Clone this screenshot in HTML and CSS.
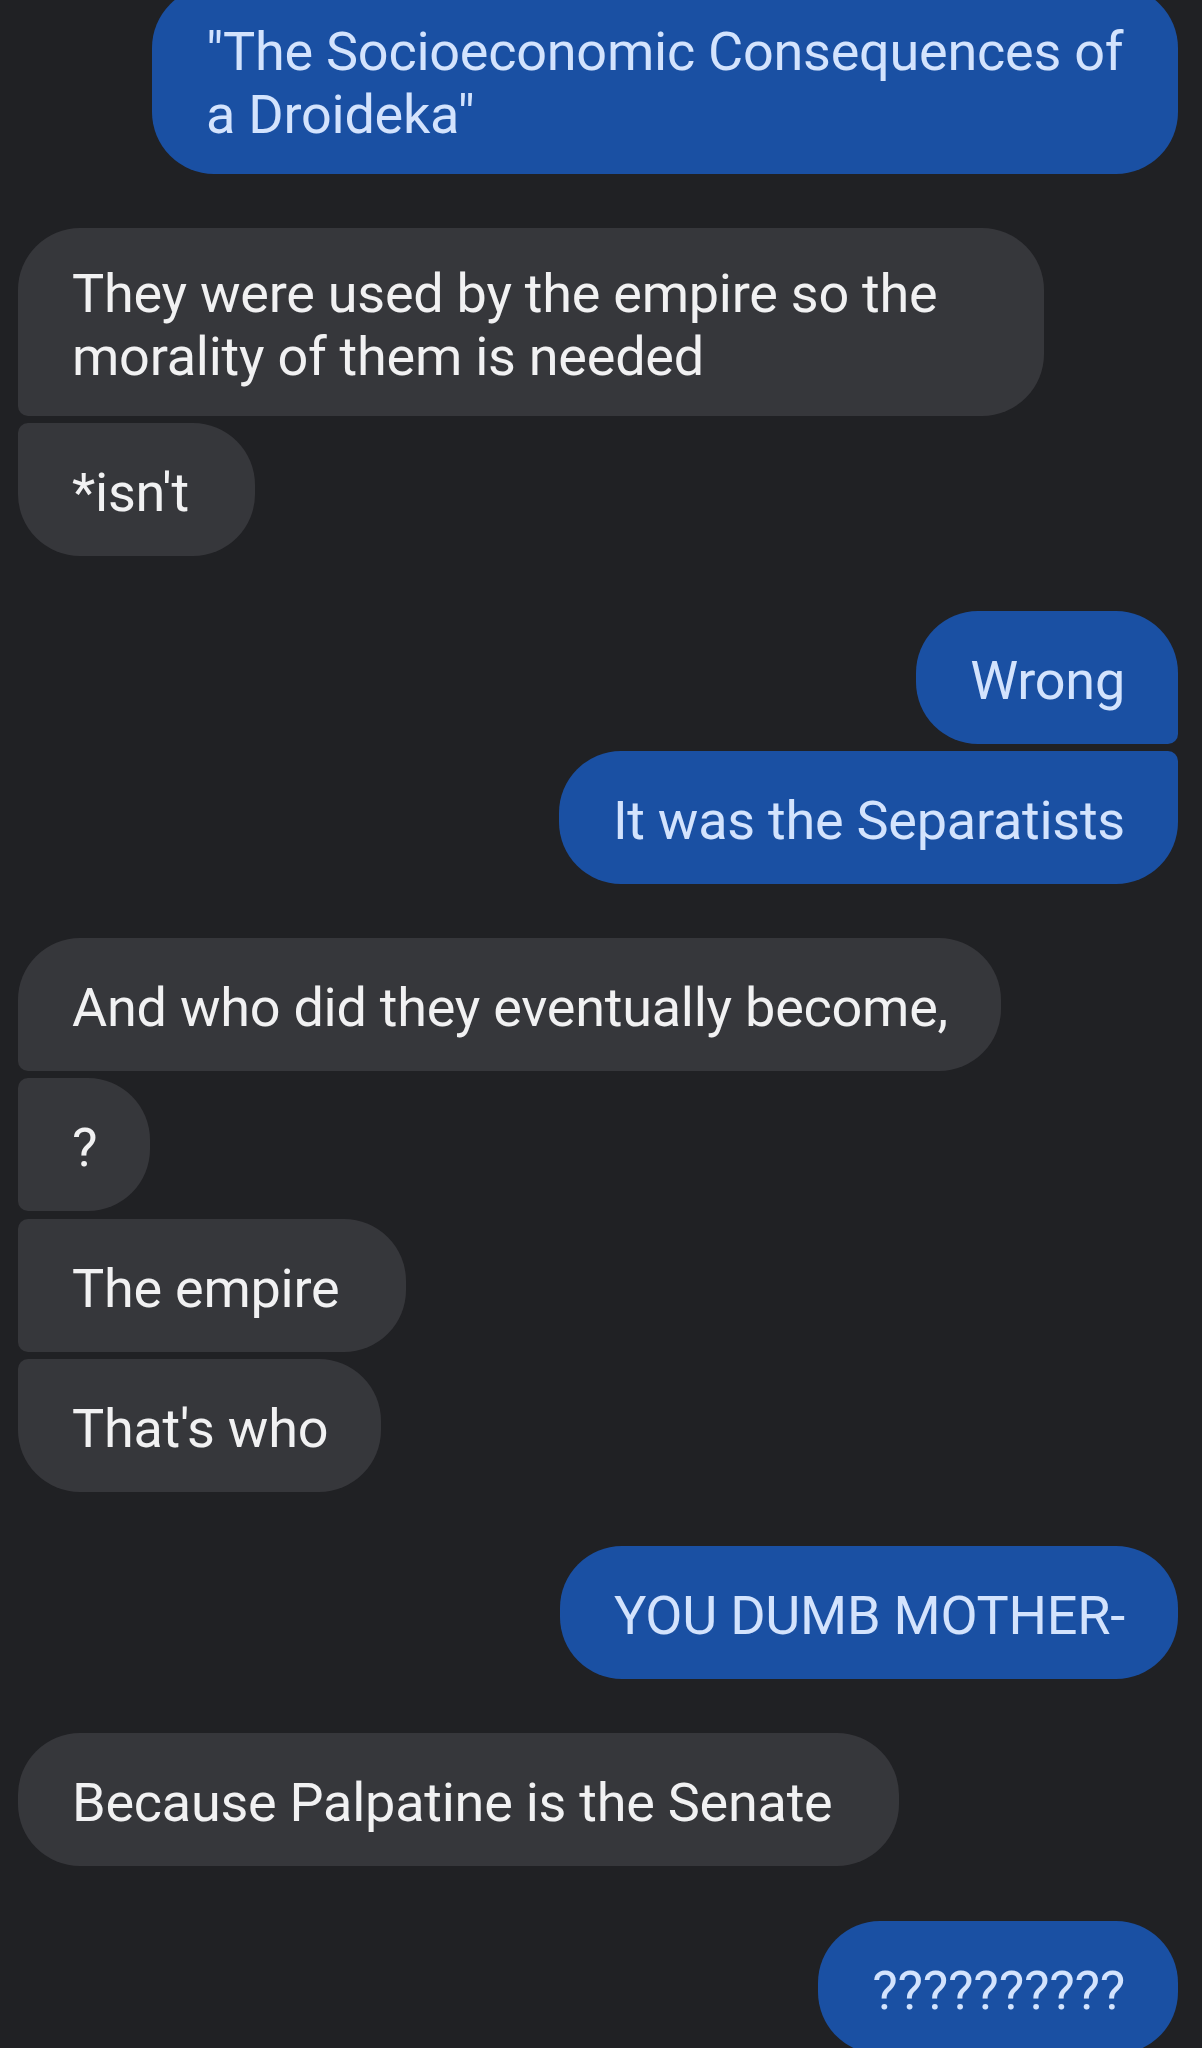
FILE: index.html
```html
<!DOCTYPE html>
<html lang="en">
<head>
<meta charset="utf-8">
<title>Messages</title>
<link rel="stylesheet" href="styles.css">
</head>
<body>
<main class="thread">
  <div class="group group--out">
    <div class="bubble bubble--out bubble--wide">"The Socioeconomic Consequences of<br>a Droideka"</div>
  </div>

  <div class="group group--in">
    <div class="bubble bubble--in bubble--wide pos-first">They were used by the empire so the<br>morality of them is needed</div>
    <div class="bubble bubble--in pos-last">*isn't </div>
  </div>

  <div class="group group--out">
    <div class="bubble bubble--out pos-first">Wrong</div>
    <div class="bubble bubble--out pos-last">It was the Separatists</div>
  </div>

  <div class="group group--in">
    <div class="bubble bubble--in pos-first">And who did they eventually become,</div>
    <div class="bubble bubble--in pos-mid">?</div>
    <div class="bubble bubble--in pos-mid">The empire </div>
    <div class="bubble bubble--in pos-last">That's who</div>
  </div>

  <div class="group group--out">
    <div class="bubble bubble--out">YOU DUMB MOTHER-</div>
  </div>

  <div class="group group--in">
    <div class="bubble bubble--in">Because Palpatine is the Senate </div>
  </div>

  <div class="group group--out">
    <div class="bubble bubble--out">??????????</div>
  </div>
</main>
</body>
</html>
```

FILE: styles.css
```css
* {
  box-sizing: border-box;
}

html, body {
  margin: 0;
  padding: 0;
  background: #202124;
}

body {
  font-family: Roboto, "Noto Sans", sans-serif;
  font-size: 54px;
  line-height: 63px;
  letter-spacing: -0.25px;
  overflow: hidden;
  height: 2048px;
}

.thread {
  display: flex;
  flex-direction: column;
  gap: 54.3px;
  padding: 0 24px 0 18px;
  margin-top: -14px;
}

.group {
  display: flex;
  flex-direction: column;
  gap: 7.2px;
}

.group--in {
  align-items: flex-start;
}

.group--out {
  align-items: flex-end;
}

.bubble {
  display: flex;
  align-items: center;
  min-height: 133px;
  max-width: 1026px;
  padding: 34px 53px 28px 54px;
  border-radius: 62px;
  white-space: pre;
}

.bubble--wide {
  width: 1026px;
}

.bubble--in {
  background: #36373b;
  color: #f1f1f2;
}

.bubble--out {
  background: #1a50a3;
  color: #d3e3fd;
}

.bubble--in.pos-first {
  border-bottom-left-radius: 10px;
}

.bubble--in.pos-mid {
  border-top-left-radius: 10px;
  border-bottom-left-radius: 10px;
}

.bubble--in.pos-last {
  border-top-left-radius: 10px;
}

.bubble--out.pos-first {
  border-bottom-right-radius: 10px;
}

.bubble--out.pos-last {
  border-top-right-radius: 10px;
}
```
